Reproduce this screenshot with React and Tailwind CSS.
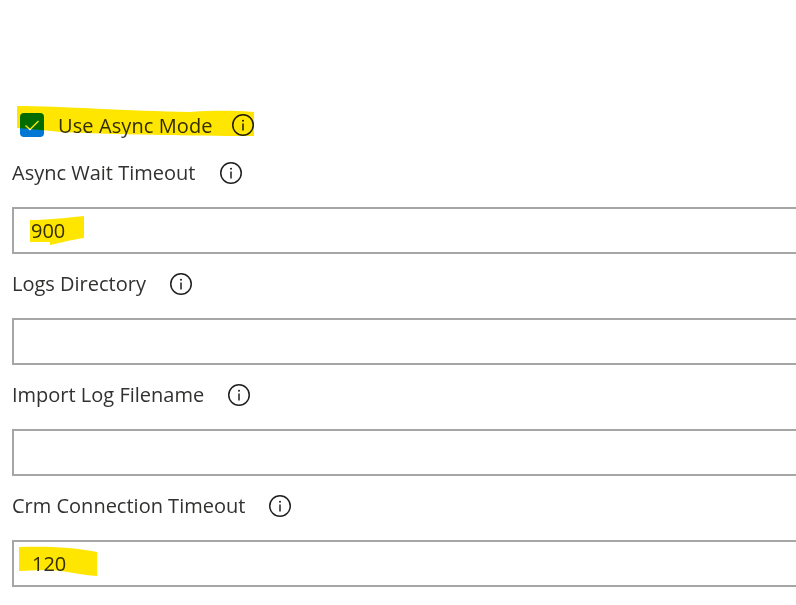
function InfoIcon() {
  return (
    <svg width="24" height="24" viewBox="0 0 24 24" fill="none" className="shrink-0">
      <circle cx="12" cy="12" r="10.25" stroke="#201f1e" strokeWidth="1.5" />
      <rect x="11.25" y="10.5" width="1.5" height="7" fill="#201f1e" />
      <circle cx="12" cy="7.75" r="1" fill="#201f1e" />
    </svg>
  );
}

function Field({ label, gap, value, valueClass }) {
  return (
    <div className="flex flex-col">
      <div className="mb-[3px] flex h-[62px] items-center">
        <span className="text-[20px] text-[#323130]">{label}</span>
        <span className={gap}><InfoIcon /></span>
      </div>
      <div className="flex h-[47px] w-[900px] items-center border-2 border-[#a6a6a6] bg-white">
        <span className={valueClass}>{value}</span>
      </div>
    </div>
  );
}

export default function App() {
  return (
    <div className="relative h-screen w-full overflow-hidden bg-white pl-3 pt-[113px] font-['Open_Sans',sans-serif]">
      <div className="flex h-6 items-center pl-2">
        <div className="flex h-6 w-6 items-center justify-center rounded-[4px] bg-[#0078d4]">
          <svg width="16" height="16" viewBox="0 0 16 16" fill="none">
            <path d="M1.5 8.5 L6 12.5 L14.5 4" stroke="#fff" strokeWidth="1.4" />
          </svg>
        </div>
        <span className="ml-[14px] pt-px text-[20px] tracking-[0.1px] text-[#323130]">Use Async Mode</span>
        <span className="ml-[18px]"><InfoIcon /></span>
      </div>

      <div className="mt-[5px] flex flex-col [&>*+*]:-mt-px">
        <Field label="Async Wait Timeout" gap="ml-6" value="900" valueClass="pl-[17px] text-[20px] text-[#323130]" />
        <Field label="Logs Directory" gap="ml-[23px]" />
        <Field label="Import Log Filename" gap="ml-[23px]" />
        <Field label="Crm Connection Timeout" gap="ml-[23px]" value="120" valueClass="pl-[18px] text-[20px] text-[#323130]" />
      </div>

      {/* marker highlights drawn over the screenshot */}
      <svg width="796" height="605" viewBox="0 0 796 605" className="pointer-events-none absolute left-0 top-0 mix-blend-multiply">
        <path d="M17 106 C60 106 130 111 190 112 C220 110 240 111 254 112 L254 136 C210 136 130 135 60 132 C45 130 30 129 17 128 Z" fill="#ffe600" />
        <path d="M30 220 C45 220 65 218 84 216 L84 238 C70 240 60 243 50 245 L50 242 C44 242 36 242 30 242 Z" fill="#ffe600" />
        <path d="M19 547 C45 546 75 547 97 552 L97 576 C80 575 65 570 45 570 C35 570 27 571 19 571 Z" fill="#ffe600" />
      </svg>
    </div>
  );
}
